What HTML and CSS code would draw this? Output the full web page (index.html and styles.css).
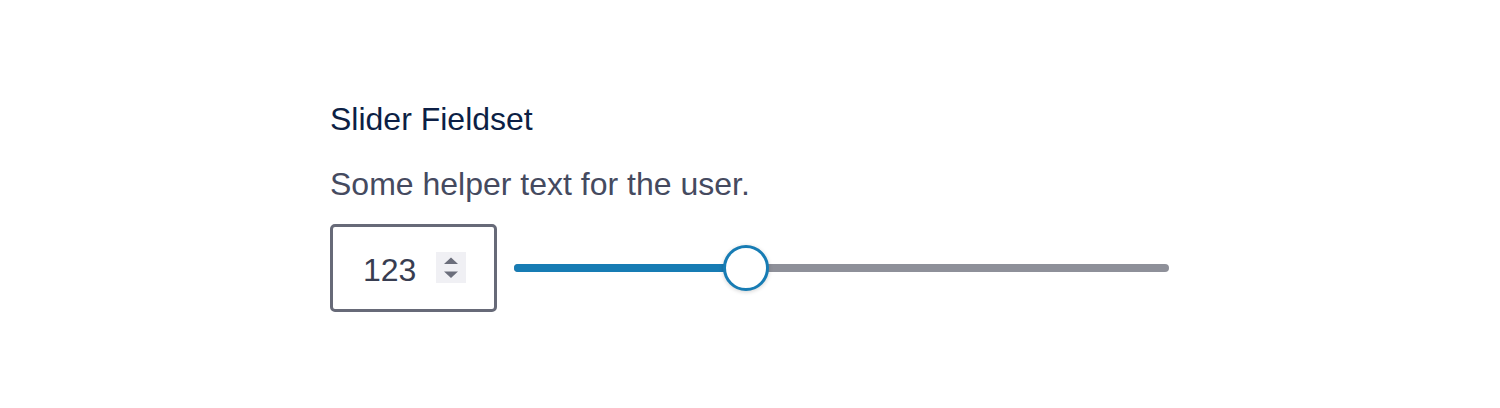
FILE: index.html
```html
<!DOCTYPE html>
<html lang="en">
<head>
<meta charset="utf-8">
<title>Slider Fieldset</title>
<link rel="stylesheet" href="styles.css">
</head>
<body>
<fieldset class="fieldset">
  <legend class="label">Slider Fieldset</legend>
  <p class="helper">Some helper text for the user.</p>
  <div class="controls">
    <div class="number-box">
      <span class="number">123</span>
      <span class="spinner">
        <svg width="30" height="31" viewBox="0 0 30 31">
          <path d="M8 12 L15 5.5 L22 12 Z" fill="#6b6e7b"/>
          <path d="M8 19.5 L15 26 L22 19.5 Z" fill="#6b6e7b"/>
        </svg>
      </span>
    </div>
    <div class="slider">
      <div class="track">
        <div class="fill" style="width: 232px"></div>
      </div>
      <div class="thumb" style="left: 209px"></div>
    </div>
  </div>
</fieldset>
</body>
</html>
```
FILE: styles.css
```css
html, body {
  margin: 0;
  padding: 0;
  background: #ffffff;
}
body {
  font-family: "Liberation Sans", Arial, sans-serif;
  width: 1500px;
  height: 408px;
  overflow: hidden;
}
.fieldset {
  border: 0;
  margin: 0;
  padding: 101px 0 0 330px;
  min-width: 0;
}
.label {
  padding: 0;
  float: left;
  width: 100%;
  font-size: 32px;
  line-height: 36px;
  color: #0c1f45;
  margin: 0;
}
.helper {
  clear: both;
  margin: 0;
  padding-top: 29px;
  font-size: 32px;
  line-height: 36px;
  color: #454a5f;
}
.controls {
  display: flex;
  align-items: center;
  margin-top: 22px;
}
.number-box {
  box-sizing: border-box;
  width: 167px;
  height: 88px;
  border: 3px solid #676a78;
  border-radius: 5px;
  display: flex;
  align-items: center;
  padding: 3px 28px 0 30px;
  justify-content: space-between;
}
.number {
  font-size: 32px;
  line-height: 36px;
  color: #383d51;
}
.spinner {
  width: 30px;
  height: 31px;
  background: #f0f0f4;
  display: block;
  margin-top: -4px;
}
.spinner svg {
  display: block;
}
.slider {
  position: relative;
  margin-left: 17px;
  width: 655px;
  height: 46px;
  display: flex;
  align-items: center;
}
.track {
  width: 100%;
  height: 8px;
  border-radius: 4px;
  background: #8e9099;
  overflow: hidden;
}
.fill {
  height: 100%;
  background: #177cb4;
}
.thumb {
  position: absolute;
  top: 0;
  box-sizing: border-box;
  width: 46px;
  height: 46px;
  border-radius: 50%;
  border: 3px solid #177cb4;
  background: #ffffff;
  box-shadow: 0 1px 4px rgba(0, 0, 0, 0.18);
}
```
